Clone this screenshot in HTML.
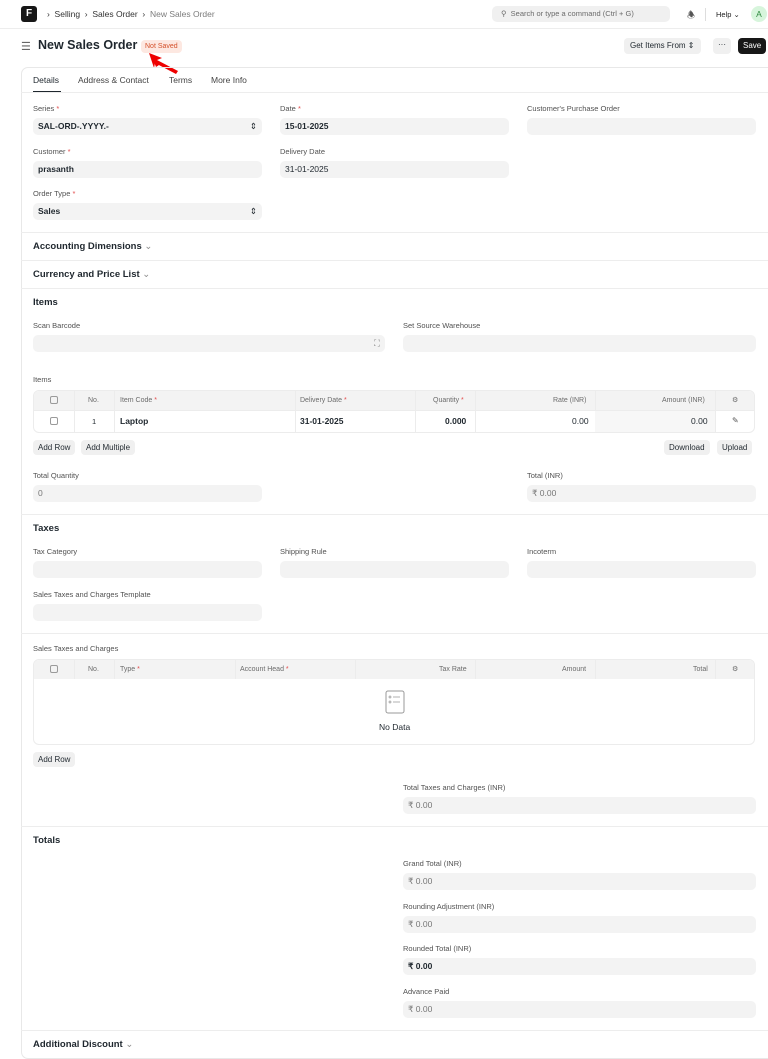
<!DOCTYPE html>
<html><head><meta charset="utf-8"><style>
*{box-sizing:border-box;margin:0;padding:0}
body{width:768px;height:1059px;background:#fff;font-family:"Liberation Sans",sans-serif;color:#1f272e;position:relative;overflow:hidden;font-size:8px}
.a{position:absolute}
.l{position:absolute;font-size:7.5px;color:#525252}
.r{color:#e24c4c}
.i{position:absolute;height:17px;background:#f3f3f3;border-radius:5px;font-size:8.5px;padding:0 5px;line-height:17px;color:#1f272e}
.b{font-weight:bold}
.g{color:#8d8d8d;font-weight:normal}
.hl{position:absolute;left:21px;width:747px;height:1px;background:#ededed}
.sec{position:absolute;left:33px;font-size:9.5px;font-weight:bold;color:#1f272e}
.btn{position:absolute;height:15px;background:#f0f0f0;border-radius:4px;font-size:8px;line-height:15px;padding:0 5px;color:#1f272e}
.tbl{position:absolute;left:33px;width:722px;border:1px solid #ececec;border-radius:6px;overflow:hidden}
.th{position:absolute;top:0;height:19px;background:#f3f3f3;font-size:7px;color:#6b6b6b;line-height:19px}
.c{position:absolute;top:0;bottom:0;border-left:1px solid #ececec}
.cb{position:absolute;width:8px;height:8px;border:1px solid #9a9a9a;border-radius:2px}
</style></head><body>
<!-- navbar -->
<div class="a" style="left:0;top:0;width:768px;height:29px;border-bottom:1px solid #ededed"></div>
<div class="a" style="left:21px;top:6px;width:16px;height:16px;background:#171717;border-radius:3px;color:#fff;font-weight:bold;font-size:10px;text-align:center;line-height:16px">F</div>
<div class="a" style="left:47px;top:9px;font-size:8.5px;color:#333">›&nbsp; Selling &nbsp;›&nbsp; Sales Order &nbsp;›&nbsp; <span style="color:#7c7c7c">New Sales Order</span></div>
<div class="a" style="left:492px;top:6px;width:178px;height:16px;background:#f0f0f0;border-radius:5px;font-size:7.5px;color:#6b6b6b;line-height:16px;padding-left:9px">&#9906;&nbsp; Search or type a command (Ctrl + G)</div>
<div class="a" style="left:687px;top:8px;font-size:9px;color:#555">&#128365;</div>
<div class="a" style="left:705px;top:8px;width:1px;height:13px;background:#ddd"></div>
<div class="a" style="left:716px;top:10px;font-size:7.5px;color:#222">Help ⌄</div>
<div class="a" style="left:751px;top:6px;width:16px;height:16px;border-radius:50%;background:#d7f5dc;color:#2f8a3f;font-size:8.5px;text-align:center;line-height:16px">A</div>
<!-- header -->
<div class="a" style="left:21px;top:40px;font-size:11px;color:#666">☰</div>
<div class="a b" style="left:38px;top:38px;font-size:12.5px">New Sales Order</div>
<div class="a" style="left:141px;top:40px;height:13px;padding:0 4px;background:#fde8e1;color:#d4502a;border-radius:4px;font-size:7px;line-height:13px">Not Saved</div>
<svg class="a" style="left:145px;top:51px" width="40" height="24"><path d="M6 3 L14 14 L11 16 Z" fill="#e00"/><path d="M4 2 L17 7 L12 9 L33 20 L31 23 L10 12 L9 17 Z" fill="#e00"/></svg>
<div class="btn" style="left:624px;top:38px;height:16px;line-height:16px;padding:0 6px">Get Items From ⇕</div>
<div class="btn" style="left:713px;top:38px;height:16px;width:18px;text-align:center;line-height:14px">···</div>
<div class="btn" style="left:738px;top:38px;height:16px;line-height:16px;background:#171717;color:#fff">Save</div>
<!-- card -->
<div class="a" style="left:21px;top:67px;width:760px;height:992px;border:1px solid #e8e8e8;border-radius:7px"></div>
<div class="a" style="left:33px;top:75px;font-size:8.5px;color:#1f272e">Details</div>
<div class="a" style="left:33px;top:91px;width:28px;height:1.5px;background:#1f272e"></div>
<div class="a" style="left:78px;top:75px;font-size:8.5px;color:#444">Address &amp; Contact</div>
<div class="a" style="left:169px;top:75px;font-size:8.5px;color:#444">Terms</div>
<div class="a" style="left:211px;top:75px;font-size:8.5px;color:#444">More Info</div>
<div class="hl" style="top:92px"></div>

<div class="l" style="left:33px;top:104px">Series <span class="r">*</span></div>
<div class="i b" style="left:33px;top:118px;width:229px">SAL-ORD-.YYYY.-<span style="float:right;font-weight:normal">⇕</span></div>
<div class="l" style="left:280px;top:104px">Date <span class="r">*</span></div>
<div class="i b" style="left:280px;top:118px;width:229px">15-01-2025</div>
<div class="l" style="left:527px;top:104px">Customer's Purchase Order</div>
<div class="i" style="left:527px;top:118px;width:229px"></div>
<div class="l" style="left:33px;top:147px">Customer <span class="r">*</span></div>
<div class="i b" style="left:33px;top:161px;width:229px">prasanth</div>
<div class="l" style="left:280px;top:147px">Delivery Date</div>
<div class="i" style="left:280px;top:161px;width:229px">31-01-2025</div>
<div class="l" style="left:33px;top:189px">Order Type <span class="r">*</span></div>
<div class="i b" style="left:33px;top:203px;width:229px">Sales<span style="float:right;font-weight:normal">⇕</span></div>

<div class="hl" style="top:232px"></div>
<div class="sec" style="top:241px">Accounting Dimensions <span class="g">⌄</span></div>
<div class="hl" style="top:260px"></div>
<div class="sec" style="top:269px">Currency and Price List <span class="g">⌄</span></div>
<div class="hl" style="top:288px"></div>
<div class="sec" style="top:297px">Items</div>
<div class="l" style="left:33px;top:321px">Scan Barcode</div>
<div class="i" style="left:33px;top:335px;width:352px"><span style="float:right;color:#777">⛶</span></div>
<div class="l" style="left:403px;top:321px">Set Source Warehouse</div>
<div class="i" style="left:403px;top:335px;width:353px"></div>
<div class="l" style="left:33px;top:375px">Items</div>
<div class="tbl" style="top:390px;height:43px">
 <div class="th" style="left:0;width:722px"></div>
 <div class="c" style="left:40px"></div><div class="c" style="left:80px"></div><div class="c" style="left:261px"></div><div class="c" style="left:381px"></div><div class="c" style="left:441px"></div><div class="c" style="left:561px"></div><div class="c" style="left:681px"></div>
 <div class="a" style="left:0;top:19px;width:722px;height:1px;background:#ececec"></div>
 <div class="a" style="left:561px;top:20px;width:120px;height:23px;background:#f7f7f7"></div>
 <div class="cb" style="left:16px;top:5px"></div><div class="cb" style="left:16px;top:26px"></div>
 <div class="th" style="left:54px;background:none">No.</div>
 <div class="th" style="left:86px;background:none">Item Code <span class="r">*</span></div>
 <div class="th" style="left:266px;background:none">Delivery Date <span class="r">*</span></div>
 <div class="th" style="left:399px;background:none">Quantity <span class="r">*</span></div>
 <div class="th" style="left:519px;background:none">Rate (INR)</div>
 <div class="th" style="left:628px;background:none">Amount (INR)</div>
 <div class="th" style="left:698px;background:none">⚙</div>
 <div class="a" style="left:58px;top:26px;font-size:7.5px">1</div>
 <div class="a b" style="left:86px;top:25px;font-size:8.5px">Laptop</div>
 <div class="a b" style="left:266px;top:25px;font-size:8.5px">31-01-2025</div>
 <div class="a b" style="left:411px;top:25px;font-size:8.5px">0.000</div>
 <div class="a" style="left:538px;top:25px;font-size:8.5px">0.00</div>
 <div class="a" style="left:657px;top:25px;font-size:8.5px">0.00</div>
 <div class="a" style="left:698px;top:25px;font-size:8px;color:#555">✎</div>
</div>
<div class="btn" style="left:33px;top:440px">Add Row</div>
<div class="btn" style="left:81px;top:440px">Add Multiple</div>
<div class="btn" style="left:664px;top:440px">Download</div>
<div class="btn" style="left:717px;top:440px">Upload</div>
<div class="l" style="left:33px;top:471px">Total Quantity</div>
<div class="i" style="left:33px;top:485px;width:229px;color:#777">0</div>
<div class="l" style="left:527px;top:471px">Total (INR)</div>
<div class="i" style="left:527px;top:485px;width:229px;color:#777">₹ 0.00</div>

<div class="hl" style="top:514px"></div>
<div class="sec" style="top:523px">Taxes</div>
<div class="l" style="left:33px;top:547px">Tax Category</div>
<div class="i" style="left:33px;top:561px;width:229px"></div>
<div class="l" style="left:280px;top:547px">Shipping Rule</div>
<div class="i" style="left:280px;top:561px;width:229px"></div>
<div class="l" style="left:527px;top:547px">Incoterm</div>
<div class="i" style="left:527px;top:561px;width:229px"></div>
<div class="l" style="left:33px;top:590px">Sales Taxes and Charges Template</div>
<div class="i" style="left:33px;top:604px;width:229px"></div>

<div class="hl" style="top:633px"></div>
<div class="l" style="left:33px;top:644px">Sales Taxes and Charges</div>
<div class="tbl" style="top:659px;height:86px">
 <div class="th" style="left:0;width:722px"></div>
 <div class="a" style="left:0;top:0;height:19px;width:722px">
 <div class="c" style="left:40px"></div><div class="c" style="left:80px"></div><div class="c" style="left:201px"></div><div class="c" style="left:321px"></div><div class="c" style="left:441px"></div><div class="c" style="left:561px"></div><div class="c" style="left:681px"></div></div>
 <div class="cb" style="left:16px;top:5px"></div>
 <div class="th" style="left:54px;background:none">No.</div>
 <div class="th" style="left:86px;background:none">Type <span class="r">*</span></div>
 <div class="th" style="left:206px;background:none">Account Head <span class="r">*</span></div>
 <div class="th" style="left:405px;background:none">Tax Rate</div>
 <div class="th" style="left:528px;background:none">Amount</div>
 <div class="th" style="left:659px;background:none">Total</div>
 <div class="th" style="left:698px;background:none">⚙</div>
 <svg class="a" style="left:351px;top:30px" width="20" height="24"><rect x="1" y="1" width="18" height="22" rx="2" fill="none" stroke="#999"/><circle cx="5" cy="7" r="1" fill="none" stroke="#999" stroke-width=".7"/><circle cx="5" cy="12" r="1" fill="none" stroke="#999" stroke-width=".7"/><path d="M8 7h7M8 12h7" stroke="#999" stroke-width=".8"/></svg>
 <div class="a" style="left:345px;top:62px;font-size:8.5px">No Data</div>
</div>
<div class="btn" style="left:33px;top:752px">Add Row</div>
<div class="l" style="left:403px;top:783px">Total Taxes and Charges (INR)</div>
<div class="i" style="left:403px;top:797px;width:353px;color:#777">₹ 0.00</div>

<div class="hl" style="top:826px"></div>
<div class="sec" style="top:835px">Totals</div>
<div class="l" style="left:403px;top:859px">Grand Total (INR)</div>
<div class="i" style="left:403px;top:873px;width:353px;color:#777">₹ 0.00</div>
<div class="l" style="left:403px;top:902px">Rounding Adjustment (INR)</div>
<div class="i" style="left:403px;top:916px;width:353px;color:#777">₹ 0.00</div>
<div class="l" style="left:403px;top:944px">Rounded Total (INR)</div>
<div class="i b" style="left:403px;top:958px;width:353px">₹ 0.00</div>
<div class="l" style="left:403px;top:987px">Advance Paid</div>
<div class="i" style="left:403px;top:1001px;width:353px;color:#777">₹ 0.00</div>
<div class="hl" style="top:1030px"></div>
<div class="sec" style="top:1039px">Additional Discount <span class="g">⌄</span></div>
</body></html>
